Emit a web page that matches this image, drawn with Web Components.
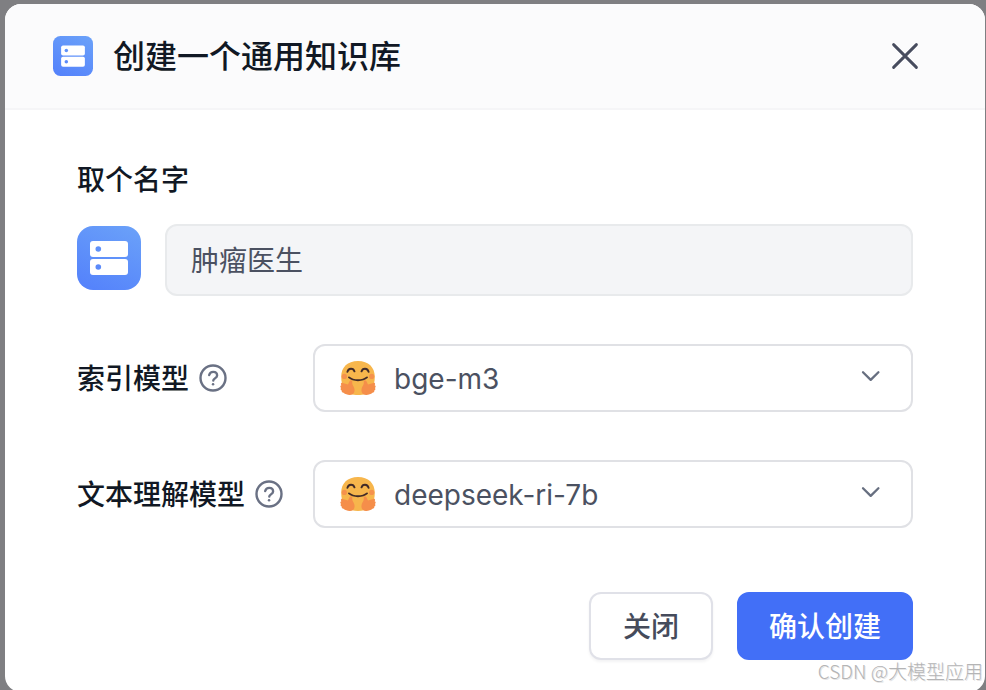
<!DOCTYPE html>
<html lang="zh-CN">
<head>
<meta charset="UTF-8">
<title>创建一个通用知识库</title>
<style>
  html, body {
    margin: 0;
    height: 100%;
    overflow: hidden;
  }

  body {
    box-sizing: border-box;
    padding: 4px 1px 0 5px;
    background: #7f7f82;
    font-family: Inter, "Noto Sans CJK SC", sans-serif;
    color: #111824;
  }
</style>
</head>
<body>
<kb-modal>
  <dataset-icon slot="icon" size="40"></dataset-icon>
  <span slot="title">创建一个通用知识库</span>

  <name-field label="取个名字" value="肿瘤医生"></name-field>
  <model-select label="索引模型" value="bge-m3"></model-select>
  <model-select label="文本理解模型" value="deepseek-ri-7b"></model-select>

  <modal-button slot="footer">关闭</modal-button>
  <modal-button slot="footer" primary>确认创建</modal-button>
</kb-modal>
<page-watermark>CSDN @大模型应用</page-watermark>

<script>
function makeTemplate(html) {
  const template = document.createElement('template');
  template.innerHTML = html;
  return template;
}

class BaseElement extends HTMLElement {
  constructor() {
    super();
    this.attachShadow({ mode: 'open' });
    this.shadowRoot.appendChild(this.constructor.template.content.cloneNode(true));
  }
}

class DatasetIcon extends BaseElement {
  static template = makeTemplate(`
    <style>
      :host {
        display: block;
        flex: none;
        width: var(--size, 64px);
        height: var(--size, 64px);
      }
      svg {
        display: block;
        width: 100%;
        height: 100%;
      }
    </style>
    <svg viewBox="0 0 64 64">
      <defs>
        <linearGradient id="bg" x1="0.75" y1="0" x2="0.25" y2="1">
          <stop offset="0" stop-color="#699ff9"/>
          <stop offset="1" stop-color="#5583fb"/>
        </linearGradient>
      </defs>
      <rect width="64" height="64" rx="16" fill="url(#bg)"/>
      <rect x="13" y="15" width="38" height="16" rx="3" fill="#fff"/>
      <rect x="13" y="33" width="38" height="16" rx="3" fill="#fff"/>
      <circle cx="21.3" cy="23" r="2.8" fill="#5f91fa"/>
      <circle cx="21.3" cy="41" r="2.8" fill="#5b8afa"/>
    </svg>
  `);

  connectedCallback() {
    if (this.hasAttribute('size')) {
      this.style.setProperty('--size', this.getAttribute('size') + 'px');
      this.shadowRoot.querySelector('rect').setAttribute('rx', 12);
    }
  }
}

class KbModal extends BaseElement {
  static template = makeTemplate(`
    <style>
      :host {
        display: flex;
        flex-direction: column;
        box-sizing: border-box;
        height: 688px;
        border-radius: 16px;
        background: #fff;
        overflow: hidden;
      }
      header {
        display: flex;
        align-items: center;
        gap: 20px;
        box-sizing: border-box;
        height: 106px;
        padding: 0 64px 0 48px;
        background: #fbfbfc;
        border-bottom: 2px solid #f5f5f7;
      }
      h1 {
        flex: 1;
        margin: 0;
        padding-top: 1px;
        font-size: 32px;
        font-weight: 500;
        line-height: 44px;
      }
      .close {
        display: flex;
        padding: 0;
        border: 0;
        background: none;
      }
      main {
        display: flex;
        flex-direction: column;
        gap: 48px;
        padding: 50px 72px 0;
      }
      footer {
        display: flex;
        justify-content: flex-end;
        gap: 24px;
        padding: 64px 72px 0;
      }
    </style>
    <header>
      <slot name="icon"></slot>
      <h1><slot name="title"></slot></h1>
      <button class="close" aria-label="关闭">
        <svg width="32" height="32" viewBox="0 0 32 32" fill="none" stroke="#474c5e" stroke-width="2.9" stroke-linecap="round">
          <path d="M4.6 4.6 27.4 27.4M27.4 4.6 4.6 27.4"/>
        </svg>
      </button>
    </header>
    <main><slot></slot></main>
    <footer><slot name="footer"></slot></footer>
  `);
}

class NameField extends BaseElement {
  static template = makeTemplate(`
    <style>
      :host {
        display: block;
      }
      .label {
        margin-bottom: 24px;
        font-size: 28px;
        font-weight: 500;
        line-height: 40px;
      }
      .row {
        display: flex;
        gap: 24px;
      }
      dataset-icon {
        margin-top: 2px;
      }
      .input {
        flex: 1;
        box-sizing: border-box;
        height: 72px;
        padding: 0 24px;
        border: 2px solid #e8eaec;
        border-radius: 12px;
        background: #f4f5f7;
        color: #4b5161;
        font-size: 28px;
        line-height: 70px;
      }
    </style>
    <div class="label"></div>
    <div class="row">
      <dataset-icon></dataset-icon>
      <div class="input"></div>
    </div>
  `);

  connectedCallback() {
    this.shadowRoot.querySelector('.label').textContent = this.getAttribute('label');
    this.shadowRoot.querySelector('.input').textContent = this.getAttribute('value');
  }
}

class ModelSelect extends BaseElement {
  static template = makeTemplate(`
    <style>
      :host {
        display: flex;
        height: 68px;
      }
      .label {
        display: flex;
        align-items: center;
        gap: 10px;
        width: 236px;
        font-size: 28px;
        font-weight: 500;
        white-space: nowrap;
      }
      .text {
        padding-bottom: 2px;
      }
      .select {
        flex: 1;
        display: flex;
        align-items: center;
        gap: 17px;
        box-sizing: border-box;
        padding: 0 28px 0 25px;
        border: 2px solid #e0e1e5;
        border-radius: 12px;
        color: #4b5161;
        font-size: 28px;
      }
      .value {
        flex: 1;
        padding: 1px 0 0 1px;
      }
      .arrow {
        margin-bottom: 4px;
      }
      svg {
        display: block;
        flex: none;
      }
    </style>
    <div class="label">
      <span class="text"></span>
      <svg width="28" height="28" viewBox="0 0 28 28" fill="none" stroke="#6a7184" stroke-width="2.4" stroke-linecap="round" stroke-linejoin="round">
        <circle cx="14" cy="14" r="12.5"/>
        <path d="M10.2 11C10.8 8.9 12.4 7.9 14.2 7.9c2.2 0 3.9 1.4 3.9 3.5 0 2.6-3.8 3.2-3.8 5.1"/>
        <path d="M14 20.2h.1"/>
      </svg>
    </div>
    <div class="select">
      <svg width="36" height="36" viewBox="0 0 36 36">
        <path d="M18 1C7.5 1 1.2 7.4 1.2 16.8c0 4.700 1 9.400 3.800 13.200C7.600 33.700 12.500 35 18 35s10.400-1.300 13-5c2.800-3.800 3.800-8.500 3.800-13.200C34.800 7.400 28.500 1 18 1z" fill="#f7b64c"/>
        <circle cx="4.300" cy="16.400" r="2.600" fill="#f5924d"/>
        <circle cx="31.700" cy="16.400" r="2.600" fill="#f5924d"/>
        <path id="hand" d="M11.100 20.300c-1.600.1-2 2-3.100 4.300l-5.300-1.700c-1.600-.3-2.400 1-1.300 2.300-1.300.3-1.500 1.900-.3 2.700-.9.900-.5 2.200.7 2.600-.4 1.200.4 2.200 1.700 2.300C5.200 34.400 7.800 35 10.100 34.900c3.900-.1 5.200-3.500 4.100-7-.6-1.800-1.700-2.700-1.900-4.200-.2-1.400.4-3.300-1.200-3.400z" fill="#f58e4a"/>
        <use href="#hand" transform="matrix(-1 0 0 1 36 0)"/>
        <g fill="none" stroke="#422b28" stroke-width="1.9" stroke-linecap="round">
          <path d="M7.400 11.900c1-4.200 6-4.200 7.100-.5"/>
          <path d="M21.500 11.400c1.100-3.700 6.100-3.700 7.100.5"/>
          <path d="M9 17.400c4.300 3.700 13.700 3.700 18 0"/>
        </g>
      </svg>
      <span class="value"></span>
      <svg class="arrow" width="24" height="24" viewBox="0 0 24 24" fill="none" stroke="#676f80" stroke-width="2.3" stroke-linecap="round" stroke-linejoin="round">
        <path d="m4 8.200 7.700 7.700 7.700-7.700"/>
      </svg>
    </div>
  `);

  connectedCallback() {
    this.shadowRoot.querySelector('.text').textContent = this.getAttribute('label');
    this.shadowRoot.querySelector('.value').textContent = this.getAttribute('value');
  }
}

class ModalButton extends BaseElement {
  static template = makeTemplate(`
    <style>
      :host {
        display: block;
      }
      button {
        display: block;
        box-sizing: border-box;
        height: 68px;
        padding: 0 32px 2px;
        border: 2px solid #e0e1e8;
        border-radius: 12px;
        background: #fff;
        box-shadow: 0 2px 3px rgba(16, 24, 40, 0.05);
        color: #454b5b;
        font: inherit;
        font-size: 28px;
        font-weight: 500;
      }
      :host([primary]) button {
        padding: 0 30px 2px;
        border-color: #426ff7;
        background: #426ff7;
        box-shadow: none;
        color: #fff;
      }
    </style>
    <button><slot></slot></button>
  `);
}

class PageWatermark extends BaseElement {
  static template = makeTemplate(`
    <style>
      :host {
        position: absolute;
        right: 3px;
        bottom: 5px;
        color: #b4b4b5;
        font: 300 19px/28px "Noto Sans CJK SC", sans-serif;
        text-shadow: 1px 1px 0 rgba(190, 190, 190, 0.4);
        white-space: nowrap;
      }
    </style>
    <slot></slot>
  `);
}

customElements.define('dataset-icon', DatasetIcon);
customElements.define('kb-modal', KbModal);
customElements.define('name-field', NameField);
customElements.define('model-select', ModelSelect);
customElements.define('modal-button', ModalButton);
customElements.define('page-watermark', PageWatermark);
</script>
</body>
</html>
